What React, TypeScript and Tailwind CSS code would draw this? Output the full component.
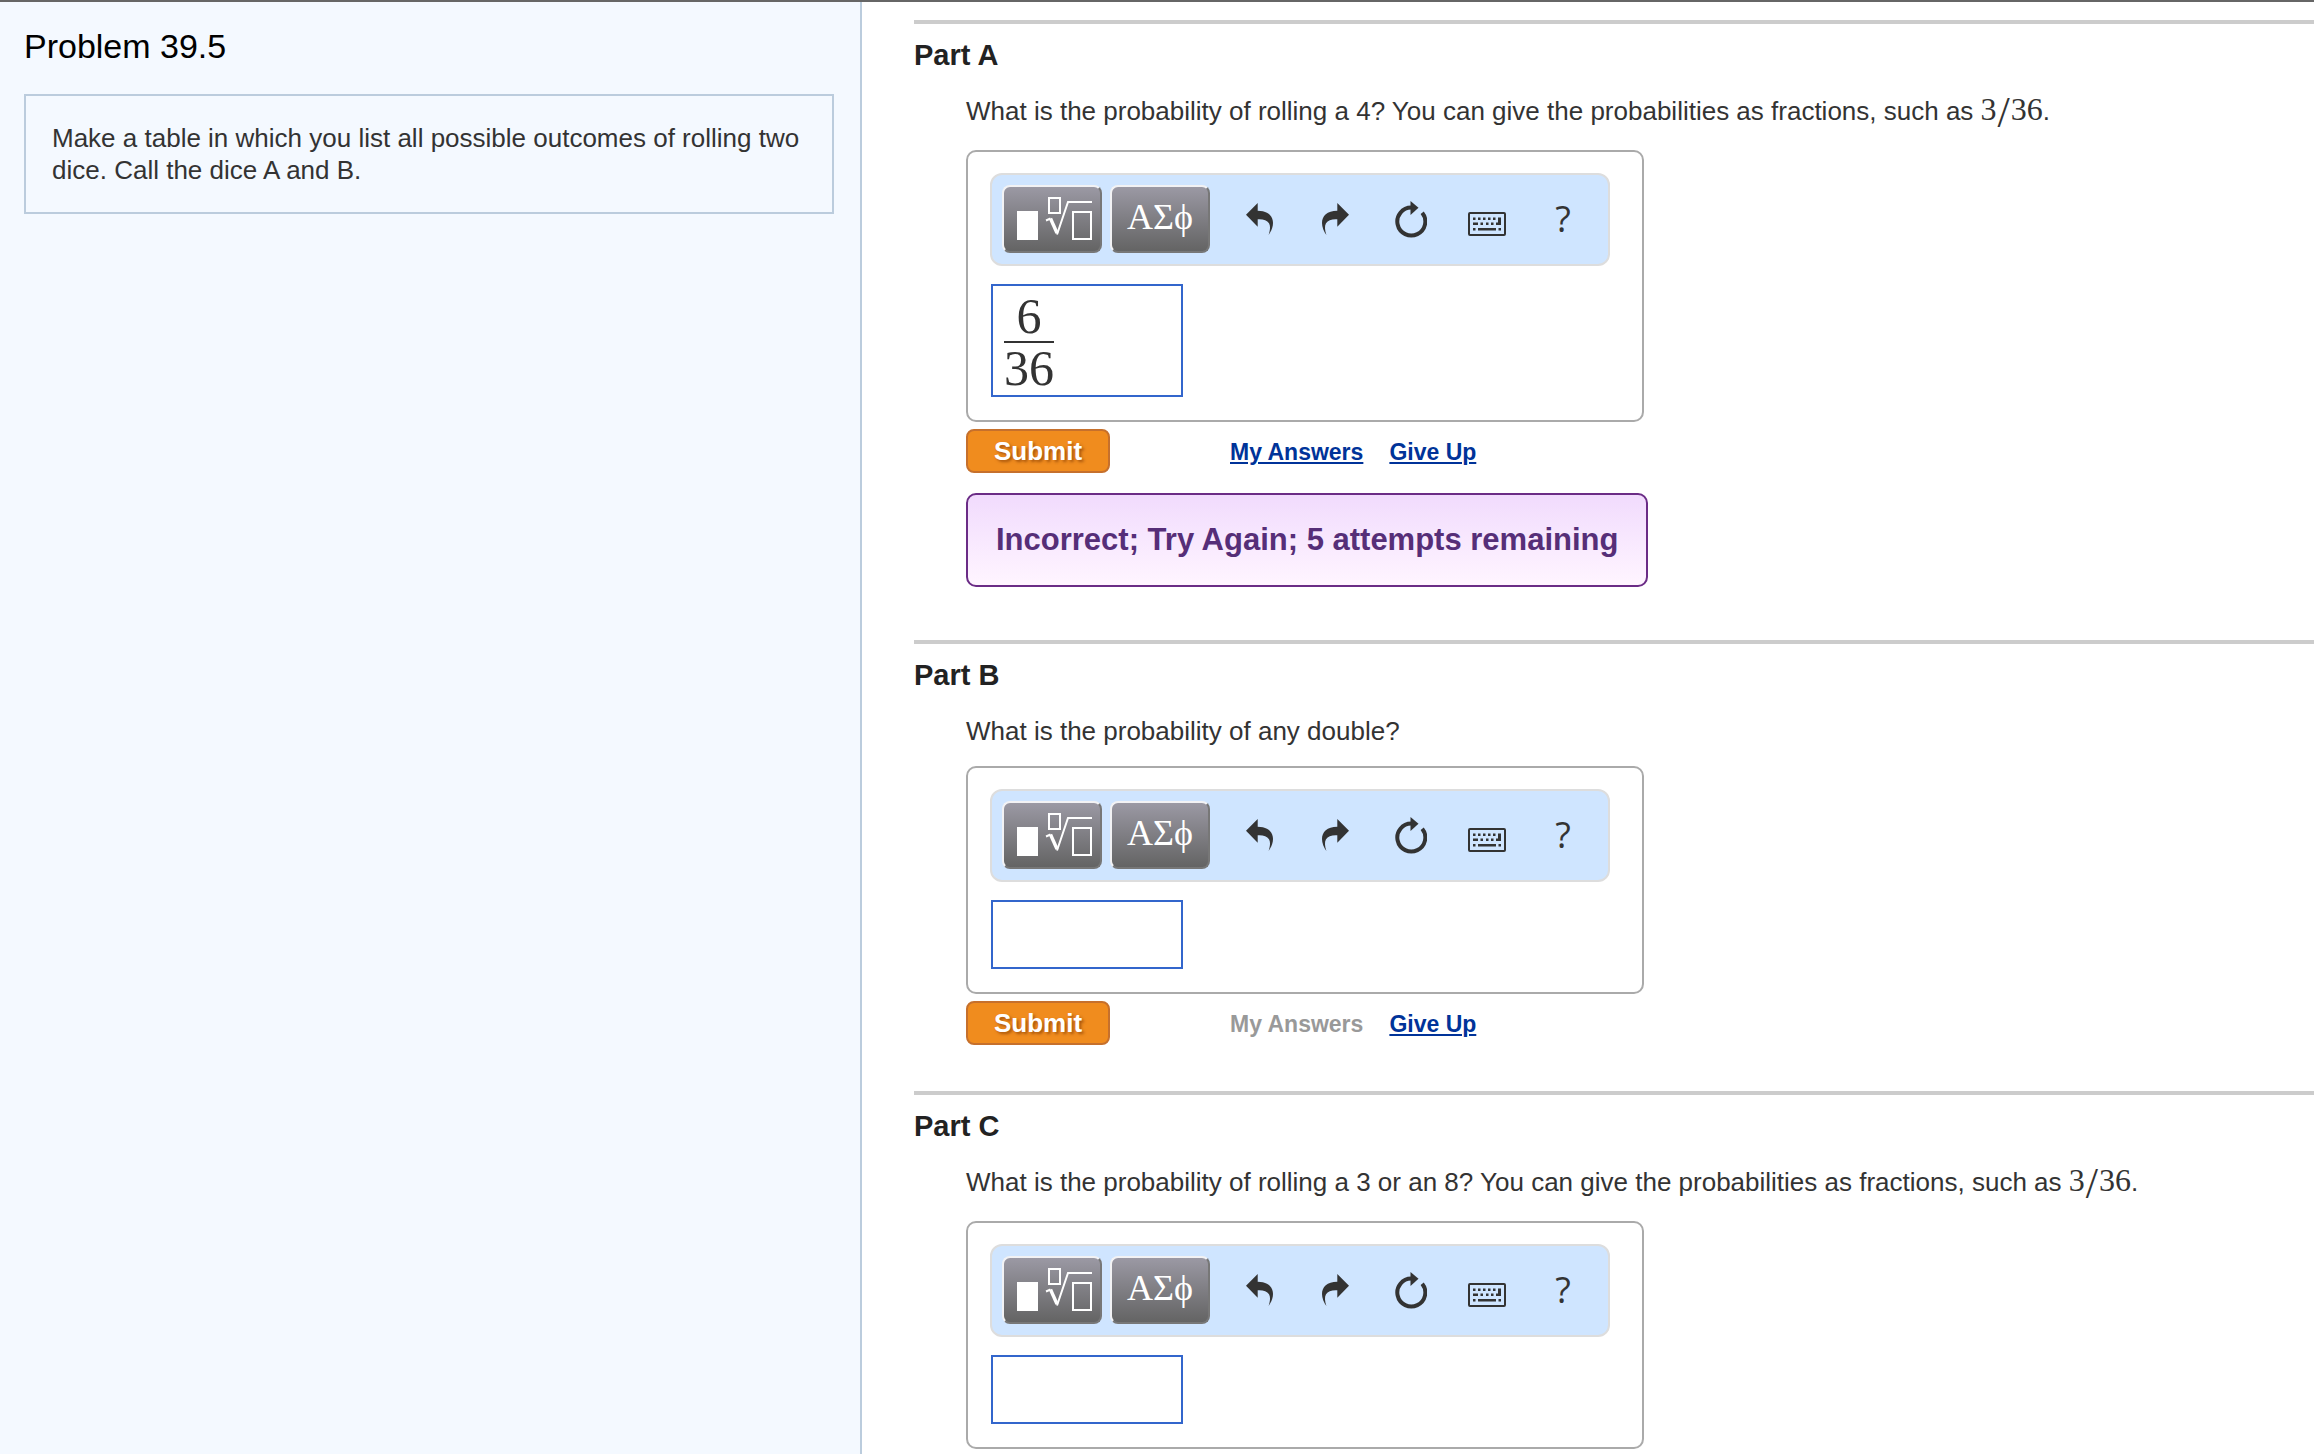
import React, { useState } from 'react';

const parts = [
  {
    id: 'a',
    title: 'Part A',
    question: 'What is the probability of rolling a 4? You can give the probabilities as fractions, such as ',
    example: ['3', '36'],
    fraction: true,
    actions: true,
    answered: true,
    feedback: 'Incorrect; Try Again; 5 attempts remaining',
  },
  {
    id: 'b',
    title: 'Part B',
    question: 'What is the probability of any double?',
    actions: true,
  },
  {
    id: 'c',
    title: 'Part C',
    question: 'What is the probability of rolling a 3 or an 8? You can give the probabilities as fractions, such as ',
    example: ['3', '36'],
  },
];

const TemplatesIcon = () => (
  <svg width="96" height="64" viewBox="2 2 96 64" fill="none" stroke="#fff" strokeWidth="2">
    <rect x="15" y="26" width="21" height="29" fill="#fff" stroke="none" />
    <rect x="47" y="13" width="11" height="15" />
    <path d="M44 35.5L48.5 33.5" />
    <path d="M48.5 33.5L55 48" strokeWidth="3.4" />
    <path d="M55 49.5L66 17H90" />
    <rect x="71" y="27" width="18" height="27" />
  </svg>
);

const UndoIcon = () => (
  <svg width="27" height="32" viewBox="0 0 27 32" fill="#333">
    <path d="M0 11.7L11.7 0V7.7C22 7.7 27 13 27 20C27 24 25.2 28.5 22.6 32C24.2 27 24.6 23 23 20.3C21 17 17 16 11.7 16.3V23.7Z" />
  </svg>
);

const RedoIcon = () => (
  <svg width="27" height="32" viewBox="0 0 27 32" fill="#333">
    <path d="M27 11.7L15.3 0V7.7C5 7.7 0 13 0 20C0 24 1.8 28.5 4.4 32C2.8 27 2.4 23 4 20.3C6 17 10 16 15.3 16.3V23.7Z" />
  </svg>
);

const ResetIcon = () => (
  <svg width="32" height="37" viewBox="0 0 32 37">
    <path d="M27.2 11.7A14 14 0 1 1 16.5 6.5" fill="none" stroke="#333" strokeWidth="4" />
    <path d="M15.5 0L23.5 6.8L15.5 14Z" fill="#333" />
  </svg>
);

const KeyboardIcon = () => (
  <svg width="38" height="34" viewBox="0 0 38 34" fill="#333">
    <rect x="1" y="11" width="36" height="22" rx="1" fill="none" stroke="#333" strokeWidth="2" />
    <path d="M5 15.5h2.5v2.5h-2.5zM10 15.5h2.5v2.5h-2.5zM15 15.5h2.5v2.5h-2.5zM20 15.5h2.5v2.5h-2.5zM25 15.5h2.5v2.5h-2.5z" />
    <path d="M5 20.5h5v2.5h-5zM12.5 20.5h2.5v2.5h-2.5zM18 20.5h2.5v2.5h-2.5zM23 20.5h2.5v2.5h-2.5zM30 15.5h3v7.5h-5v-2.5h2z" />
    <path d="M5 26h2.5v2.5h-2.5zM10 26h18v2.5h-18zM30.5 26h2.5v2.5h-2.5z" />
  </svg>
);

const bevelButton =
  'flex h-[68px] w-[100px] shrink-0 items-center justify-center rounded-lg border-2 border-t-[#f2f2f4] border-l-[#f2f2f4] border-r-[#777] border-b-[#777] bg-linear-to-b from-[#9b99a4] to-[#646464] text-white';
const iconButton = 'flex w-[76px] shrink-0 items-center justify-center text-[#333]';

const Toolbar = () => (
  <div className="flex max-w-[620px] rounded-xl border-2 border-[#ddd] bg-[#cfe5ff] pt-[10px] pb-[11px] pl-[10px]">
    <button type="button" className={bevelButton} aria-label="Templates">
      <TemplatesIcon />
    </button>
    <button type="button" className={`${bevelButton} ml-2 pb-1 font-['Liberation_Serif',serif] text-[36px] leading-none`}>
      ΑΣϕ
    </button>
    <div className="ml-[11px] flex">
      <button type="button" className={iconButton} aria-label="Undo">
        <UndoIcon />
      </button>
      <button type="button" className={iconButton} aria-label="Redo">
        <RedoIcon />
      </button>
      <button type="button" className={iconButton} aria-label="Reset">
        <ResetIcon />
      </button>
      <button type="button" className={iconButton} aria-label="Keyboard shortcuts">
        <KeyboardIcon />
      </button>
      <button type="button" className={`${iconButton} font-['Open_Sans',sans-serif] text-[36px] leading-none`}>
        ?
      </button>
    </div>
  </div>
);

const FractionAnswer = () => {
  const [top, setTop] = useState('6');
  const [bottom, setBottom] = useState('36');

  return (
    <div className="flex h-[113px] w-[192px] flex-col items-start border-2 border-[#36c] pt-[6px] pl-[11px] font-['Liberation_Serif',serif] text-[50px] text-[#333]">
      <input
        className="mb-[2px] h-[47px] w-[50px] text-center leading-[47px] outline-none"
        aria-label="Numerator"
        value={top}
        onChange={(e) => setTop(e.target.value)}
      />
      <input
        className="h-[52px] w-[50px] border-t-2 border-[#333] text-center leading-[50px] outline-none"
        aria-label="Denominator"
        value={bottom}
        onChange={(e) => setBottom(e.target.value)}
      />
    </div>
  );
};

const Part = ({ part }) => (
  <section className="border-t-4 border-[#ccc] pt-[15px]">
    <h2 className="text-[29px] leading-8 font-bold text-[#222]">{part.title}</h2>
    <div className="mt-6 pl-[52px]">
      <p className="text-[26px] leading-8 text-[#333]">
        {part.question}
        {part.example && (
          <span className="inline-block pb-2 font-['Liberation_Serif',serif] text-[32px] leading-7">
            {part.example[0]}
            <span className="mx-px align-[-7px] text-[44px] leading-[0]">/</span>
            {part.example[1]}
          </span>
        )}
        {part.example && '.'}
      </p>

      {/* Equation editor */}
      <div className="mt-[19px] max-w-[678px] rounded-[10px] border-2 border-[#aaa] pt-[21px] pr-8 pb-[23px] pl-[22px]">
        <Toolbar />
        <div className="mt-[18px] ml-px">
          {part.fraction ? (
            <FractionAnswer />
          ) : (
            <input
              className="block h-[69px] w-[192px] border-2 border-[#36c] px-3 font-['Liberation_Serif',serif] text-[50px] text-[#333] outline-none"
              aria-label={`${part.title} answer`}
            />
          )}
        </div>
      </div>

      {part.actions && (
        <div className="mt-[7px] flex items-center text-[23px] font-bold">
          <button
            type="button"
            className="h-11 w-36 rounded-lg border-2 border-[#c6702c] bg-[#f08c1e] text-[26px] leading-8 text-white text-shadow-[2px_2px_3px_rgb(120_50_0/0.6)]"
          >
            Submit
          </button>
          <div className="ml-[120px] flex gap-[26px] pt-[2px] leading-8">
            {part.answered ? (
              <a href="#answers" className="text-[#039] underline decoration-2 underline-offset-2">
                My Answers
              </a>
            ) : (
              <span className="text-[#999]">My Answers</span>
            )}
            <a href="#giveup" className="text-[#039] underline decoration-2 underline-offset-2">
              Give Up
            </a>
          </div>
        </div>
      )}

      {part.feedback && (
        <div className="mt-5 mb-[7px] w-fit rounded-[10px] border-2 border-[#6b2c86] bg-linear-to-b from-[#f1dbfd] to-[#fff5ff] px-7 py-[25px] text-[31px] leading-10 font-bold text-[#562e78]">
          {part.feedback}
        </div>
      )}
    </div>
  </section>
);

export default function App() {
  return (
    <div className="grid min-h-screen grid-cols-[862fr_1452fr] border-t-2 border-[#666] bg-white font-['Liberation_Sans',Arial,sans-serif]">
      {/* Problem introduction */}
      <aside className="border-r-2 border-[#bcd] bg-[#f4f9ff] pt-6 pr-[26px] pl-6 text-[#333]">
        <h1 className="text-[34px] leading-10 text-black">Problem 39.5</h1>
        <p className="mt-7 border-2 border-[#bcd] px-[26px] py-[26px] text-[26px] leading-8">
          Make a table in which you list all possible outcomes of rolling two dice. Call the dice A and B.
        </p>
      </aside>

      <main className="flex flex-col gap-[46px] pt-[18px] pl-[52px]">
        {parts.map((part) => (
          <Part key={part.id} part={part} />
        ))}
      </main>
    </div>
  );
}
